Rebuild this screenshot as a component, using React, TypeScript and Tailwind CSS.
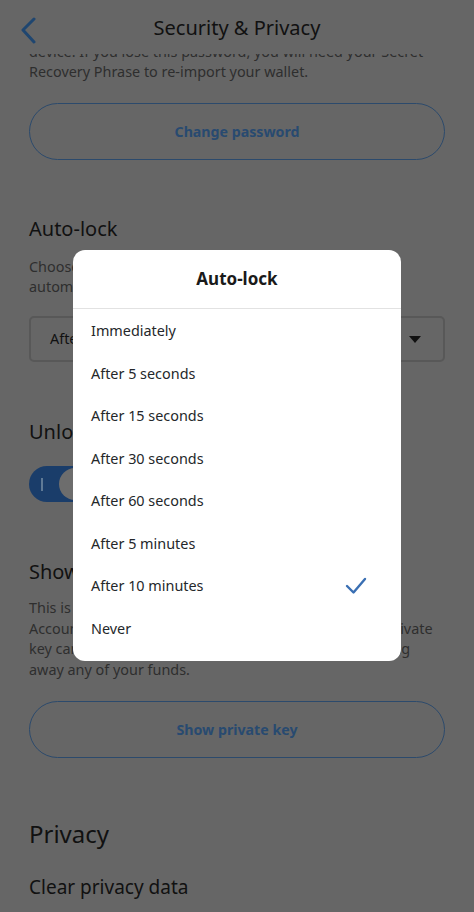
import React from "react";

const font = { fontFamily: '"Noto Sans", "Liberation Sans", sans-serif' };

const options = [
  "Immediately",
  "After 5 seconds",
  "After 15 seconds",
  "After 30 seconds",
  "After 60 seconds",
  "After 5 minutes",
  "After 10 minutes",
  "Never",
];

export default function App() {
  return (
    <div
      className="relative w-[474px] h-[912px] overflow-hidden bg-[#666666] flex flex-col"
      style={font}
    >
      {/* Header */}
      <div className="relative z-10 h-[54px] shrink-0 bg-[#666666] flex items-start justify-center">
        <svg
          className="absolute left-[20px] top-[17px]"
          width="18"
          height="28"
          viewBox="0 0 18 28"
          fill="none"
        >
          <path
            d="M14 2 L3 13 L14 25"
            stroke="#1f4670"
            strokeWidth="3"
            strokeLinecap="round"
            strokeLinejoin="round"
          />
        </svg>
        <span className="text-[20px] leading-none text-[#111111] mt-[18px]">
          Security &amp; Privacy
        </span>
      </div>

      {/* Content */}
      <div className="flex-1 overflow-hidden px-[29px]">
        <div className="-mt-[12px] flex flex-col">
          <p className="text-[14.4px] leading-[20px] text-[#2e2e2e]">
            device. If you lose this password, you will need your Secret
            <br />
            Recovery Phrase to re-import your wallet.
          </p>

          <div className="mt-[21px] h-[57px] rounded-full border-[1.5px] border-[#2c4a6c] flex items-center justify-center">
            <span className="text-[14.2px] font-bold text-[#284a70]">
              Change password
            </span>
          </div>

          <h2 className="mt-[56px] text-[20px] leading-[26px] text-[#111111]">
            Auto-lock
          </h2>
          <p className="mt-[15px] text-[14.4px] leading-[20px] text-[#2e2e2e]">
            Choose the amount of time before the application
            <br />
            automatically locks.
          </p>

          <div className="mt-[19px] h-[46px] rounded-[5px] border-2 border-[#585858] flex items-center justify-between pl-[19px] pr-[22px]">
            <span className="text-[14.4px] text-[#111111]">After 10 minutes</span>
            <svg width="12" height="7" viewBox="0 0 12 7">
              <path d="M0 0 L12 0 L6 7 Z" fill="#111111" />
            </svg>
          </div>

          <h2 className="mt-[57px] text-[20px] leading-[26px] text-[#111111]">
            Unlock with Face ID?
          </h2>

          <div className="mt-[21px] w-[64px] h-[36px] rounded-full bg-[#1a3d6a] flex items-center justify-between pl-[12px] pr-[2px]">
            <div className="w-[2px] h-[13px] bg-[#5f7a96]" />
            <div className="w-[32px] h-[32px] rounded-full bg-[#6d6d6d]" />
          </div>

          <h2 className="mt-[57px] text-[20px] leading-[26px] text-[#111111]">
            Show private key
          </h2>
          <p className="mt-[13px] text-[14.4px] leading-[20.7px] text-[#2e2e2e]">
            This is the private key for the current selected account:
            <br />
            Account 1. Never disclose this key. Anyone with your private
            <br />
            key can fully control your account, including transferring
            <br />
            away any of your funds.
          </p>

          <div className="mt-[20px] h-[57px] rounded-full border-[1.5px] border-[#2c4a6c] flex items-center justify-center">
            <span className="text-[14.2px] font-bold text-[#284a70]">
              Show private key
            </span>
          </div>

          <h2 className="mt-[60px] text-[24px] leading-[32px] text-[#111111]">
            Privacy
          </h2>
          <p className="mt-[24px] text-[19px] leading-[26px] text-[#111111]">
            Clear privacy data
          </p>
        </div>
      </div>

      {/* Modal */}
      <div className="absolute left-[73px] top-[250px] w-[328px] rounded-[12px] bg-white pb-[11px] flex flex-col">
        <div className="h-[59px] flex items-center justify-center border-b border-[#e2e2e2]">
          <span className="text-[17px] font-bold text-[#1a1a1a]">Auto-lock</span>
        </div>
        <div className="pt-[1px] flex flex-col">
          {options.map((o) => (
            <div
              key={o}
              className="h-[42.5px] flex items-center justify-between pl-[18px] pr-[33px]"
            >
              <span className="text-[14.4px] text-[#24272a]">{o}</span>
              {o === "After 10 minutes" && (
                <svg width="24" height="20" viewBox="0 0 24 20" fill="none">
                  <path
                    d="M3 10 L9.5 16.5 L21 3"
                    stroke="#3a6fb3"
                    strokeWidth="2.4"
                    strokeLinecap="round"
                    strokeLinejoin="round"
                  />
                </svg>
              )}
            </div>
          ))}
        </div>
      </div>
    </div>
  );
}
